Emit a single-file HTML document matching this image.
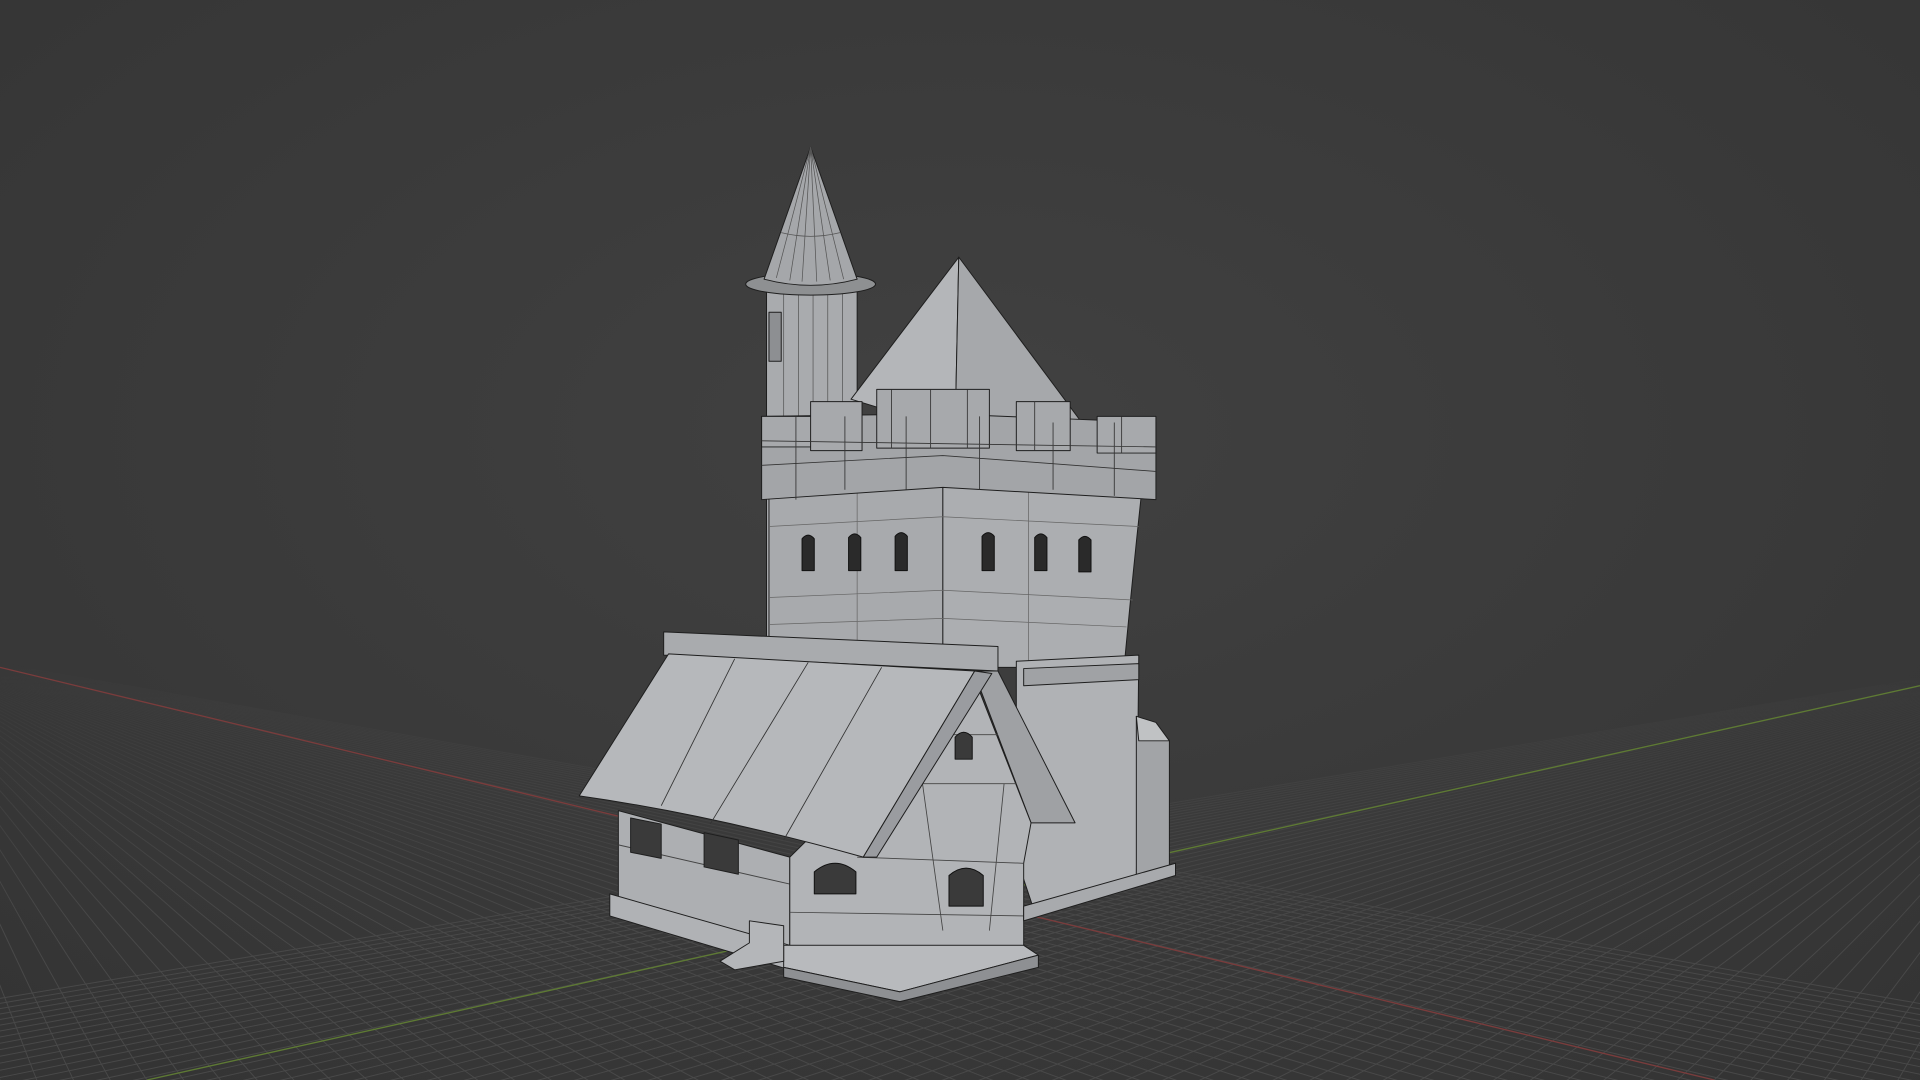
<!DOCTYPE html>
<html><head><meta charset="utf-8"><style>
html,body{margin:0;padding:0;width:1920px;height:1080px;overflow:hidden;background:#3d3d3d}
svg{display:block;position:absolute;left:0;top:0}
</style></head><body>
<svg id="s" width="1920" height="1080" viewBox="0 0 1568 882" xmlns="http://www.w3.org/2000/svg">
<defs>
<radialGradient id="bg" cx="50%" cy="40%" r="80%">
<stop offset="0" stop-color="#414141"/><stop offset="1" stop-color="#333"/>
</radialGradient>
<linearGradient id="fade" x1="0" y1="530" x2="0" y2="760" gradientUnits="userSpaceOnUse">
<stop offset="0" stop-color="#fff" stop-opacity="0"/><stop offset="1" stop-color="#fff" stop-opacity="0.9"/>
</linearGradient>
<mask id="fm"><rect x="0" y="520" width="1568" height="362" fill="url(#fade)"/></mask>
<clipPath id="cp"><rect x="0" y="0" width="1568" height="882"/></clipPath>
</defs>
<g clip-path="url(#cp)">
<rect width="1568" height="882" fill="url(#bg)"/>
<g id="grid" mask="url(#fm)" stroke="#4b4b4b" stroke-width="0.8"></g>
<line x1="0" y1="545" x2="1400" y2="882" stroke="#7a3c3c" stroke-width="1.1"/>
<line x1="120" y1="882" x2="1568" y2="560" stroke="#5e7a34" stroke-width="1.1"/>

<g stroke="#1e1e1e" stroke-width="0.8" stroke-linejoin="round">
<rect x="626" y="236" width="74" height="290" fill="#a9abae"/>
<path d="M640 236V520M652 236V520M664 236V520M676 236V520M688 236V520" stroke="#555" stroke-width="0.6"/>
<rect x="628" y="255" width="10" height="40" fill="#8d8f92"/>
<ellipse cx="662" cy="232" rx="53" ry="9" fill="#8e9092"/>
<path d="M662 120L700 228Q662 238 624 228Z" fill="#a5a7aa"/>
<path d="M662 120L634 227M662 120L645 229M662 120L655 230M662 120L667 230M662 120L678 229M662 120L689 228" stroke="#555" stroke-width="0.6"/>
<path d="M638 190Q662 196 686 190" fill="none" stroke="#555" stroke-width="0.6"/>
<path d="M783 210L695 326L780 352Z" fill="#b4b6b9"/>
<path d="M783 210L780 352L896 362Z" fill="#a6a8ab"/>
<path d="M628 405L770 395L770 545L628 545Z" fill="#a8aaad"/>
<path d="M770 395L932 405Q925 470 918 545L770 545Z" fill="#acaeb1"/>
<path d="M628 430L770 422L930 430M628 488L770 482L925 490M628 510L770 505L920 512M700 400V545M840 400V545" fill="none" stroke="#666" stroke-width="0.6"/>
<path d="M622 340L770 338L944 345L944 408L770 398L622 408Z" fill="#a3a5a8"/>
<path d="M662 328h42v40h-42zM716 318h92v48h-92zM830 328h44v40h-44zM896 340h48v30h-48zM622 340h40v25h-40z" fill="#a7a9ac"/>
<path d="M622 360L944 365M622 380L770 372L944 385M650 340V408M690 340V400M740 340V400M800 340V400M860 345V400M910 345V405M728 318V366M760 318V366M790 318V366M845 328V368M916 340V370" fill="none" stroke="#333" stroke-width="0.7"/>
<g fill="#2a2a2a" stroke="#111">
<path d="M655 466v-26q5-6 10 0v26z"/><path d="M693 466v-27q5-6 10 0v27z"/><path d="M731 466v-28q5-6 10 0v28z"/>
<path d="M802 466v-28q5-6 10 0v28z"/><path d="M845 466v-27q5-6 10 0v27z"/><path d="M881 467v-26q5-6 10 0v26z"/>
</g>
<path d="M830 540L930 535L928 720L845 745L830 700Z" fill="#b0b2b5"/>
<path d="M928 585L955 605L955 710L928 715Z" fill="#a2a4a7"/>
<path d="M928 585L944 590L955 605L930 605Z" fill="#c0c2c4"/>
<path d="M836 546L930 542L930 555L836 560Z" fill="#a0a2a5"/>
<path d="M542 516L815 528L815 548L542 535Z" fill="#a9abae"/>
<path d="M795 548L815 548L878 672L842 672Z" fill="#9fa1a4"/>
<path d="M505 662L645 700L645 780L505 742Z" fill="#adafb2"/>
<path d="M505 690L645 722" stroke="#444" fill="none"/>
<g fill="#3a3a3a"><path d="M515 668l25 5v28l-25-5z"/><path d="M575 680l28 6v28l-28-6z"/></g>
<path d="M795 552L842 672L836 705L836 772L645 772L645 700Z" fill="#b2b4b7"/>
<path d="M700 700L836 705M720 640L830 640M745 600L815 600M752 630L770 760M820 640L808 760M645 745L836 748" fill="none" stroke="#444" stroke-width="0.7"/>
<g fill="#3a3a3a" stroke="#111">
<path d="M780 620v-18q7-8 14 0v18z"/><path d="M665 730v-18q17-14 34 0v18z"/><path d="M775 740v-25q14-12 28 0v25z"/>
</g>
<path d="M546 534L796 548L705 700Q580 665 473 650Z" fill="#b6b8bb"/>
<path d="M796 548L810 550L716 700L705 700Z" fill="#9a9ca0"/>
<path d="M600 538L540 658M660 541L580 673M720 545L640 686" stroke="#333" stroke-width="0.7" fill="none"/>
<path d="M498 730L645 772L645 792L498 748Z" fill="#b0b2b5"/>
<path d="M640 772L836 772L848 780L735 810L640 790Z" fill="#b8babd"/>
<path d="M640 790L735 810L848 780L848 790L735 818L640 798Z" fill="#8e9093"/>
<path d="M836 740L960 705L960 715L836 752Z" fill="#a8aaad"/>
<path d="M612 752L640 756L640 785L600 792L588 785L612 770Z" fill="#b4b6b9"/>
</g>
</g>
</svg>
<script>
var g=document.getElementById('grid'),ns='http://www.w3.org/2000/svg';
function L(a,b,c,d){var l=document.createElementNS(ns,'line');l.setAttribute('x1',a);l.setAttribute('y1',b);l.setAttribute('x2',c);l.setAttribute('y2',d);g.appendChild(l);}
var hy=522, vr=[-110,hy], vg=[1760,hy];
for(var i=-60;i<=60;i++){var x=120+i*30;L(vr[0],vr[1],vr[0]+(x-vr[0])*3,vr[1]+(882-vr[1])*3);}
for(var i=-60;i<=60;i++){var x=1400+i*30;L(vg[0],vg[1],vg[0]+(x-vg[0])*3,vg[1]+(882-vg[1])*3);}
</script>
</body></html>
